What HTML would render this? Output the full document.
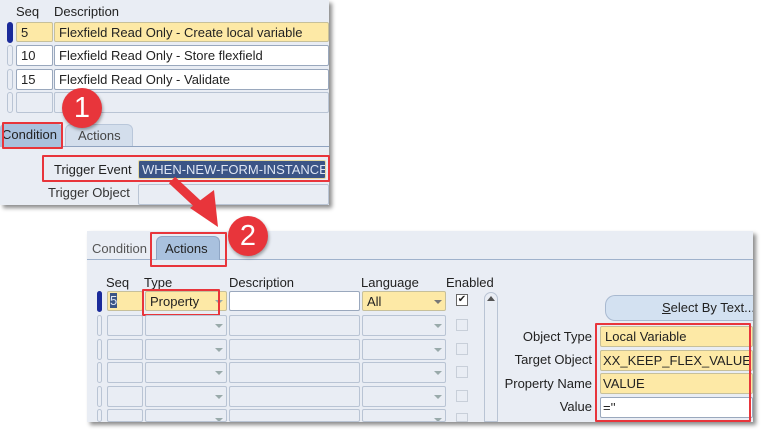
<!DOCTYPE html>
<html><head><style>
*{margin:0;padding:0;box-sizing:border-box}
body{width:768px;height:437px;background:#fff;position:relative;overflow:hidden;font-family:"Liberation Sans",Arial,sans-serif;font-size:13px;color:#222}
.a{position:absolute}
.p{background:#e9edf4}
.f{position:absolute;border:1px solid #b9c4d4;border-radius:2px;background:#e9edf4;height:21px;padding:2px 4px;white-space:nowrap;overflow:hidden;font-size:13px}
.w{background:#fff;border-color:#9aa8bd}
.y{background:#fde9a6;border-color:#c7c09a}
.ind{position:absolute;width:6px;height:21px;border:1px solid #b9c4d4;border-radius:3px;background:#e9edf4}
.red{position:absolute;border:2px solid #e8353b;border-radius:1px}
.c{position:absolute;width:40px;height:40px;border-radius:50%;background:#e8353b;color:#fff;font-size:29px;text-align:center;line-height:40px;box-shadow:1px 2px 3px rgba(0,0,0,.35)}
.dd{position:absolute;right:3px;top:8px;width:0;height:0;border-left:4px solid transparent;border-right:4px solid transparent;border-top:4px solid #9aa}
.cb{position:absolute;width:12px;height:12px;border:1px solid #c8cfd9;background:#e9edf4}
.l{position:absolute;text-align:right;width:110px;font-size:13px}
</style></head><body>

<div class="a p" style="left:0;top:0;width:329px;height:205px;box-shadow:3px 3px 4px rgba(0,0,0,.45)"></div>
<div class="a" style="left:16px;top:4px">Seq</div>
<div class="a" style="left:54px;top:4px">Description</div>
<div class="ind" style="left:7px;top:22px;background:#1a2a9a;border-color:#1a2a9a"></div>
<div class="f y" style="left:16px;top:22px;width:37px;height:20px">5</div>
<div class="f y" style="left:54px;top:22px;width:275px;height:20px">Flexfield Read Only - Create local variable</div>
<div class="ind" style="left:7px;top:45px"></div>
<div class="f w" style="left:16px;top:45px;width:37px">10</div>
<div class="f w" style="left:54px;top:45px;width:275px">Flexfield Read Only - Store flexfield</div>
<div class="ind" style="left:7px;top:69px"></div>
<div class="f w" style="left:16px;top:69px;width:37px">15</div>
<div class="f w" style="left:54px;top:69px;width:275px">Flexfield Read Only - Validate</div>
<div class="ind" style="left:7px;top:92px"></div>
<div class="f" style="left:16px;top:92px;width:37px"></div>
<div class="f" style="left:54px;top:92px;width:275px"></div>
<div class="a" style="left:0;top:146px;width:329px;height:1px;background:#8fa3c0"></div>
<div class="a" style="left:0;top:124px;width:62px;height:23px;background:#a9c1de;border-radius:4px 4px 0 0;padding:3px 2px">Condition</div>
<div class="a" style="left:65px;top:124px;width:68px;height:22px;background:#d3deec;border:1px solid #b9c7da;border-bottom:none;border-radius:6px 6px 0 0;padding:3px 12px;color:#444">Actions</div>
<div class="red" style="left:2px;top:122px;width:61px;height:27px"></div>
<div class="c" style="left:62px;top:88px">1</div>
<div class="a" style="left:54px;top:162px">Trigger Event</div>
<div class="f" style="left:138px;top:160px;width:188px;height:19px;background:#3b5486;color:#dfe6f4;border:1px solid #e5d9a0;padding:1px 3px">WHEN-NEW-FORM-INSTANCE</div>
<div class="red" style="left:42px;top:155px;width:288px;height:27px"></div>
<div class="a" style="left:48px;top:185px;color:#333">Trigger Object</div>
<div class="f" style="left:138px;top:184px;width:191px;height:21px"></div>

<svg class="a" style="left:0;top:0" width="768" height="437">
<line x1="172" y1="180" x2="202" y2="208" stroke="#e8353b" stroke-width="9"/>
<polygon points="190,208 214,190 218,227" fill="#e8353b"/>
</svg>

<div class="a p" style="left:87px;top:231px;width:666px;height:191px;box-shadow:3px 3px 4px rgba(0,0,0,.45)"></div>
<div class="a" style="left:87px;top:259px;width:666px;height:1px;background:#9fb2cc"></div>
<div class="a" style="left:92px;top:241px;color:#555">Condition</div>
<div class="a" style="left:156px;top:236px;width:64px;height:24px;background:#a9c1de;border:1px solid #8fa6c5;border-bottom:none;border-radius:6px 6px 0 0;padding:4px 8px">Actions</div>
<div class="red" style="left:150px;top:232px;width:77px;height:35px"></div>
<div class="c" style="left:228px;top:216px">2</div>

<div class="a" style="left:106px;top:275px">Seq</div>
<div class="a" style="left:144px;top:275px">Type</div>
<div class="a" style="left:229px;top:275px">Description</div>
<div class="a" style="left:361px;top:275px">Language</div>
<div class="a" style="left:446px;top:275px">Enabled</div>

<div class="ind" style="left:97px;top:291px;width:5px;background:#1a2a9a;border-color:#1a2a9a"></div>
<div class="f y" style="left:107px;top:291px;width:36px;height:20px;padding:1px 2px"><span style="background:#3b5486;color:#dfe6f4">5</span></div>
<div class="f y" style="left:145px;top:291px;width:82px;height:20px">Property<span class="dd"></span></div>
<div class="f w" style="left:229px;top:291px;width:131px;height:20px"></div>
<div class="f y" style="left:362px;top:291px;width:84px;height:20px">All<span class="dd" style="border-top-color:#777"></span></div>
<div class="cb" style="left:456px;top:294px;background:#fff;border-color:#666;font-size:10px;line-height:10px;text-align:center">✔</div>
<div class="red" style="left:142px;top:289px;width:78px;height:27px"></div>

<div class="a" style="left:484px;top:292px;width:14px;height:130px;border:1px solid #b9c4d4;border-radius:7px 7px 0 0;background:#e9edf4"></div>
<div class="a" style="left:487px;top:296px;width:0;height:0;border-left:4px solid transparent;border-right:4px solid transparent;border-bottom:5px solid #555"></div>

<div class="ind" style="left:97px;top:315px;width:5px"></div><div class="f" style="left:107px;top:315px;width:36px"></div><div class="f" style="left:145px;top:315px;width:82px"><span class="dd"></span></div><div class="f" style="left:229px;top:315px;width:131px"></div><div class="f" style="left:362px;top:315px;width:84px"><span class="dd"></span></div><div class="cb" style="left:456px;top:319px"></div>
<div class="ind" style="left:97px;top:339px;width:5px"></div><div class="f" style="left:107px;top:339px;width:36px"></div><div class="f" style="left:145px;top:339px;width:82px"><span class="dd"></span></div><div class="f" style="left:229px;top:339px;width:131px"></div><div class="f" style="left:362px;top:339px;width:84px"><span class="dd"></span></div><div class="cb" style="left:456px;top:343px"></div>
<div class="ind" style="left:97px;top:362px;width:5px"></div><div class="f" style="left:107px;top:362px;width:36px"></div><div class="f" style="left:145px;top:362px;width:82px"><span class="dd"></span></div><div class="f" style="left:229px;top:362px;width:131px"></div><div class="f" style="left:362px;top:362px;width:84px"><span class="dd"></span></div><div class="cb" style="left:456px;top:366px"></div>
<div class="ind" style="left:97px;top:386px;width:5px"></div><div class="f" style="left:107px;top:386px;width:36px"></div><div class="f" style="left:145px;top:386px;width:82px"><span class="dd"></span></div><div class="f" style="left:229px;top:386px;width:131px"></div><div class="f" style="left:362px;top:386px;width:84px"><span class="dd"></span></div><div class="cb" style="left:456px;top:390px"></div>
<div class="ind" style="left:97px;top:409px;width:5px;height:13px"></div><div class="f" style="left:107px;top:409px;width:36px;height:13px"></div><div class="f" style="left:145px;top:409px;width:82px;height:13px"><span class="dd"></span></div><div class="f" style="left:229px;top:409px;width:131px;height:13px"></div><div class="f" style="left:362px;top:409px;width:84px;height:13px"><span class="dd"></span></div><div class="cb" style="left:456px;top:413px;height:9px"></div>

<div class="a" style="left:605px;top:295px;width:148px;height:26px;background:#d3e1f1;border:1px solid #a8b9d0;border-right:none;border-radius:10px 0 0 10px;padding:4px 0 0 56px;font-size:13px;white-space:nowrap;overflow:hidden"><u>S</u>elect By Text...</div>
<div class="l" style="left:482px;top:329px">Object Type</div>
<div class="l" style="left:482px;top:352px">Target Object</div>
<div class="l" style="left:482px;top:376px">Property Name</div>
<div class="l" style="left:482px;top:399px">Value</div>
<div class="f y" style="left:600px;top:326px;width:153px">Local Variable</div>
<div class="f y" style="left:600px;top:350px;width:153px;padding-left:2px">XX_KEEP_FLEX_VALUE</div>
<div class="f y" style="left:600px;top:373px;width:153px;padding-left:2px">VALUE</div>
<div class="f w" style="left:600px;top:397px;width:153px;padding-left:2px">=''</div>
<div class="red" style="left:595px;top:323px;width:156px;height:99px"></div>
</body></html>
